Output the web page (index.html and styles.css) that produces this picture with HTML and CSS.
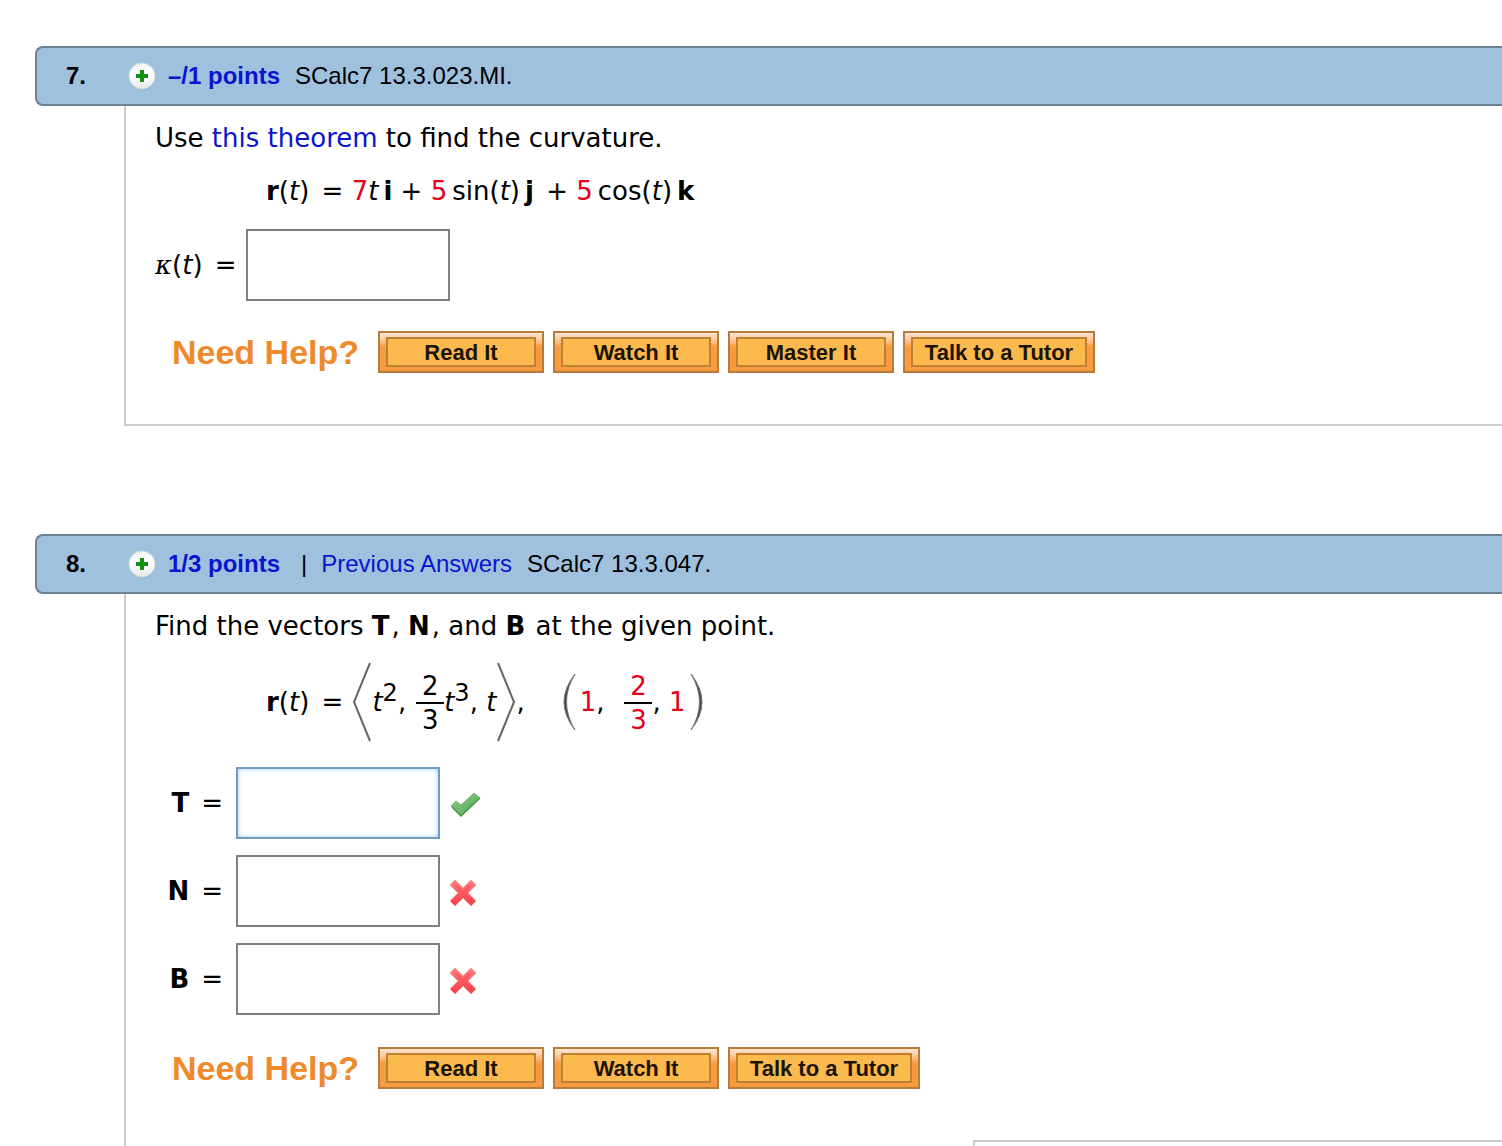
FILE: index.html
```html
<!DOCTYPE html>
<html lang="en">
<head>
<meta charset="utf-8">
<title>SCalc7 Homework</title>
<link rel="stylesheet" href="styles.css">
</head>
<body>
<svg class="defs" aria-hidden="true">
  <defs>
    <linearGradient id="ball" x1="0" y1="0" x2="0" y2="1"><stop offset="0" stop-color="#f4f4f2"/><stop offset=".5" stop-color="#ffffff"/><stop offset="1" stop-color="#e6e6e4"/></linearGradient>
    <linearGradient id="green" x1="0" y1="0" x2="1" y2="1"><stop offset="0" stop-color="#86cc86"/><stop offset="1" stop-color="#57a857"/></linearGradient>
    <linearGradient id="red" x1="0" y1="0" x2="0" y2="1"><stop offset="0" stop-color="#ff8080"/><stop offset="1" stop-color="#f03f44"/></linearGradient>
    <symbol id="plus" viewBox="0 0 28 28">
      <circle cx="14" cy="15" r="13" fill="#8d9ba6" opacity=".55"/>
      <circle cx="14" cy="14" r="13" fill="url(#ball)" stroke="#d3dbe0"/>
      <path d="M12 8h4v4h4v4h-4v4h-4v-4H8v-4h4z" fill="#149014"/>
    </symbol>
    <symbol id="check" viewBox="0 0 32 28">
      <path d="M1 15l5-5 5 4L24 2l6 5-19 18z" fill="url(#green)" stroke="#7cbd7c" stroke-linejoin="round"/>
      <path d="M2 16l9 9L30 7" fill="none" stroke="#469546" stroke-width="1.5"/>
    </symbol>
    <symbol id="cross" viewBox="0 0 28 28">
      <path d="M5 1l8 8 8-8 5 5-8 8 8 8-5 5-8-8-8 8-5-5 8-8-8-8z" fill="url(#red)" stroke="#ff9494" stroke-linejoin="round"/>
      <path d="M6 7l14 14M20 7L6 21" stroke="#fa5259" stroke-width="3" opacity=".6"/>
    </symbol>
  </defs>
</svg>
<main class="assignment">
  <section class="question">
    <header class="bar">
      <span class="number">7.</span>
      <svg class="plus"><use href="#plus"/></svg>
      <a class="points" href="#points7">–/1 points</a>
      <span class="source">SCalc7 13.3.023.MI.</span>
    </header>
    <div class="content">
      <p class="prompt">Use <a href="#theorem">this theorem</a> to find the curvature.</p>
      <div class="formula"><span class="fn"><b>r</b>(<i>t</i>)</span> = <em>7</em><i>t</i><b class="thin">i</b> + <em>5</em><span class="thin">sin(<i>t</i>)</span><b class="thin fn">j</b> + <em>5</em><span class="thin">cos(<i>t</i>)</span><b class="thin">k</b></div>
      <div class="kappa">
        <label for="kappa"><span class="fn"><i class="greek">κ</i>(<i>t</i>)</span> =</label>
        <input id="kappa" class="answer" type="text">
      </div>
      <div class="help">
        <span class="need">Need Help?</span>
        <button type="button"><span>Read It</span></button>
        <button type="button"><span>Watch It</span></button>
        <button type="button"><span>Master It</span></button>
        <button type="button" class="wide"><span>Talk to a Tutor</span></button>
      </div>
    </div>
  </section>

  <section class="question last">
    <header class="bar">
      <span class="number">8.</span>
      <svg class="plus"><use href="#plus"/></svg>
      <a class="points" href="#points8">1/3 points</a>
      <span class="divider">|</span>
      <a class="previous" href="#previous">Previous Answers</a>
      <span class="source">SCalc7 13.3.047.</span>
    </header>
    <div class="content">
      <p class="prompt">Find the vectors <b>T</b>, <b>N</b>, and <b>B</b> at the given point.</p>
      <div class="formula tall">
        <span class="lead"><span class="fn"><b>r</b>(<i>t</i>)</span> =</span>
        <svg class="angle" viewBox="0 0 20 80"><path d="M18 1L2 40l16 39"/></svg>
        <span><i>t</i><sup>2</sup>,</span>
        <span class="frac"><span>2</span><span>3</span></span>
        <span><i>t</i><sup>3</sup>, <i>t</i></span>
        <svg class="angle" viewBox="0 0 20 80"><path d="M2 1l16 39L2 79"/></svg>
        <span>,</span>
        <svg class="paren open" viewBox="0 0 16 60"><path d="M14 2Q-8 30 14 58Q-3 30 14 2z"/></svg>
        <span><em>1</em>,</span>
        <em class="frac spaced"><span>2</span><span>3</span></em>
        <span>, <em>1</em></span>
        <svg class="paren" viewBox="0 0 16 60"><path d="M2 2Q24 30 2 58Q19 30 2 2z"/></svg>
      </div>
      <div class="vectors">
        <label for="vt"><b>T</b><span>=</span></label>
        <input id="vt" class="answer active" type="text">
        <svg class="check" role="img" aria-label="Correct"><use href="#check"/></svg>
        <label for="vn"><b>N</b><span>=</span></label>
        <input id="vn" class="answer" type="text">
        <svg class="cross" role="img" aria-label="Incorrect"><use href="#cross"/></svg>
        <label for="vb"><b>B</b><span>=</span></label>
        <input id="vb" class="answer" type="text">
        <svg class="cross" role="img" aria-label="Incorrect"><use href="#cross"/></svg>
      </div>
      <div class="help">
        <span class="need">Need Help?</span>
        <button type="button"><span>Read It</span></button>
        <button type="button"><span>Watch It</span></button>
        <button type="button" class="wide"><span>Talk to a Tutor</span></button>
      </div>
      <div class="panel"></div>
    </div>
  </section>
</main>
</body>
</html>
```
FILE: styles.css
```css
* { box-sizing: border-box; }

body {
  margin: 0;
  background: #fff;
  color: #000;
  font: 26px/32px "DejaVu Sans", Verdana, sans-serif;
}

a { color: #0a14cf; text-decoration: none; }
em { color: #e2001a; font-style: normal; }

.defs { position: absolute; width: 0; height: 0; }

.assignment {
  display: flex;
  flex-direction: column;
  gap: 108px;
  min-height: 100vh;
  padding: 46px 0 0 35px;
}

.question.last { display: flex; flex-direction: column; flex: 1; }

.bar {
  display: flex;
  align-items: center;
  height: 60px;
  padding-left: 29px;
  border: 2px solid #6b8394;
  border-right: 0;
  border-radius: 8px 0 0 8px;
  background: #9fc1dd;
  font: 24px/28px "Liberation Sans", Arial, sans-serif;
}

.number { width: 62px; font-weight: bold; }
.plus { width: 28px; height: 28px; margin-right: 12px; }
.points { font-weight: bold; }
.source { margin-left: 15px; }
.divider { margin: 0 14px 0 21px; }

.content {
  margin-left: 89px;
  padding: 16px 0 51px 29px;
  border-left: 2px solid #ccc;
  border-bottom: 2px solid #ccc;
}

.last .content { flex: 1; padding-bottom: 0; border-bottom: 0; }

.prompt { margin: 0; }
.prompt b { margin-right: 2px; }

.formula { margin: 21px 0 22px 111px; white-space: nowrap; }
.thin { margin-left: 5px; }
.fn { margin-right: 4px; }

.tall {
  display: flex;
  align-items: center;
  height: 80px;
  margin-top: 20px;
  margin-bottom: 25px;
}

.tall sup { font-size: 24px; line-height: 0; vertical-align: 10px; }
.lead { margin-right: 9px; }

.angle { width: 20px; height: 80px; fill: none; stroke: #666; stroke-width: 2; }
.paren { width: 16px; height: 60px; margin-left: 3px; fill: #444; stroke: #777; stroke-width: 1; }
.paren.open { margin: 0 3px 0 36px; }

.frac {
  display: flex;
  flex-direction: column;
  width: 28px;
  margin-left: 10px;
  padding-top: 3px;
  text-align: center;
}

.frac.spaced { margin-left: 20px; }
.frac span { height: 34px; }
.frac span:first-child { border-bottom: 2px solid #000; }

.kappa { display: flex; align-items: center; gap: 9px; }
.greek { font-family: "DejaVu Serif", serif; }

.answer {
  width: 204px;
  height: 72px;
  padding: 0 12px;
  border: 2px solid #808080;
  border-radius: 0;
  background: #fff;
  font: inherit;
  outline: 0;
}

.answer.active { border-color: #729bc4; box-shadow: inset 0 0 5px #a5cdf5; }

.vectors {
  display: grid;
  grid-template-columns: 71px 204px 32px;
  gap: 16px 10px;
  align-items: center;
}

.vectors label { display: flex; justify-content: flex-end; gap: 12px; padding-right: 3px; }
.check, .cross { height: 28px; margin-top: 4px; }
.check { width: 32px; }
.cross { width: 28px; }

.help {
  display: flex;
  align-items: center;
  gap: 9px;
  margin-top: 30px;
  padding-left: 17px;
}

.last .help { margin-top: 32px; }

.need {
  width: 197px;
  color: #ee8a2c;
  font: bold 34px/40px "Liberation Sans", Arial, sans-serif;
  white-space: nowrap;
}

.help button {
  width: 166px;
  height: 42px;
  padding: 4px 6px;
  border: 2px solid #b77b3c;
  border-radius: 0;
  background: linear-gradient(#fde6d0, #fbc491 8px, #f89b3e 14px);
  color: #1c1400;
  font: bold 22px/30px "Liberation Sans", Arial, sans-serif;
}

.help button.wide { width: 192px; }

.help button span {
  display: block;
  height: 30px;
  border: 2px solid #bd8136;
  background: #fbb94e;
  line-height: 28px;
  white-space: nowrap;
}

.panel {
  width: 529px;
  height: 6px;
  margin: 51px 0 0 auto;
  border-top: 2px solid #ccc;
  border-left: 2px solid #ccc;
}
```
